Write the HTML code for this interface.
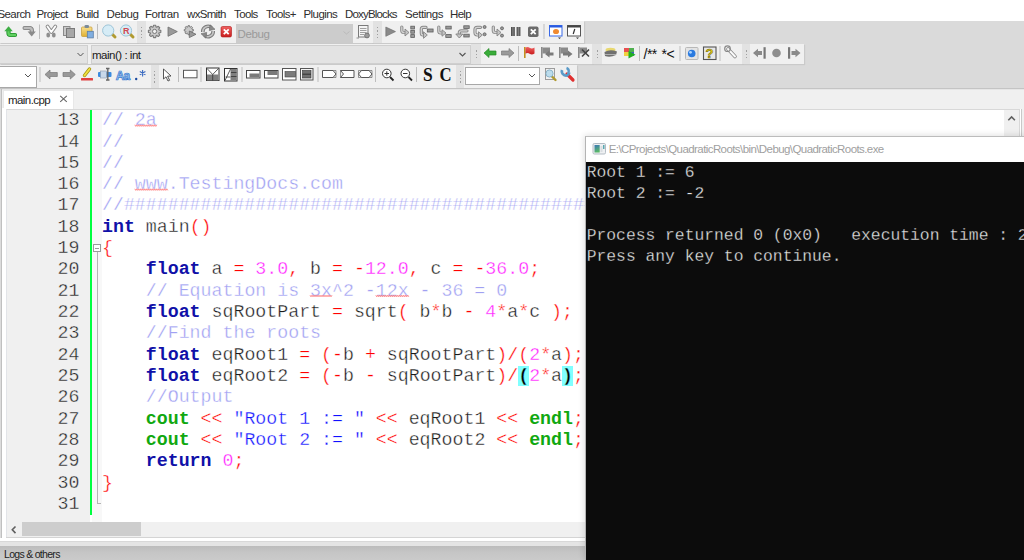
<!DOCTYPE html>
<html><head><meta charset="utf-8">
<style>
*{margin:0;padding:0;box-sizing:border-box}
html,body{width:1024px;height:560px;overflow:hidden;background:#f0f0f0;position:relative;font-family:"Liberation Sans",sans-serif}
.a{position:absolute}
#menu{left:0;top:0;width:1024px;height:21px;background:#fff}
.mi{position:absolute;top:7px;font-size:11.5px;color:#2e2e2e;white-space:pre;line-height:14px}
#dock{left:0;top:21px;width:1024px;height:67px;background:#dadada}
.tb{position:absolute;background:#f0f0f0;box-shadow:1px 1px 1px rgba(0,0,0,0.07)}
.sep{position:absolute;width:1px;background:#c4c4c4}
.grip{position:absolute;width:5px;background:#e2e2e2}
.grip::before{content:"";position:absolute;left:calc(50% - 0.5px);top:6px;bottom:5px;width:1px;background:repeating-linear-gradient(#a0a0a0 0 1.5px,transparent 1.5px 3.5px)}
#code{left:102px;top:110.2px;font-family:"Liberation Mono",monospace;font-size:18.25px;line-height:21.32px;white-space:pre;color:#1a1a1a;-webkit-text-stroke:0.35px #fff}
#nums{left:6px;top:110.2px;width:73.5px;text-align:right;font-family:"Liberation Mono",monospace;font-size:18.25px;line-height:21.32px;white-space:pre;color:#222;-webkit-text-stroke:0.35px #f0f0f0}
.k{color:#1010a8;font-weight:bold;-webkit-text-stroke:0}
.u{color:#10a810;font-weight:bold;-webkit-text-stroke:0}
.o{color:#ff0000}
.n{color:#ff20ff}
.s{color:#1010ff}
.c{color:#a0a0f2}
.b{background:#80ffff;color:#000;font-weight:bold;-webkit-text-stroke:0.35px #80ffff}
.sq{position:absolute;height:2px;background:repeating-linear-gradient(90deg,#ff8a8a 0 1px,#ffdcdc 1px 2px)}
#con{left:585.2px;top:136.2px;width:440px;height:424px;background:#0c0c0c;border-top:1px solid #bcbcbc;border-left:1px solid #b4b4b4;box-shadow:0 0 6px 1px rgba(0,0,0,0.12)}
#ctitle{position:absolute;left:0;top:0;width:100%;height:24.8px;background:#fff}
#ctext{position:absolute;left:0.5px;top:26.2px;font-family:"Liberation Mono",monospace;font-size:16.33px;line-height:20.83px;color:#e6e6e6;white-space:pre;-webkit-text-stroke:0.3px #0c0c0c}
</style></head><body>
<div id="menu" class="a">
<span class="mi" style="left:-2.5px;letter-spacing:-0.6px">Search</span>
<span class="mi" style="left:36.5px;letter-spacing:-0.67px">Project</span>
<span class="mi" style="left:76px;letter-spacing:-0.62px">Build</span>
<span class="mi" style="left:106.5px;letter-spacing:-0.37px">Debug</span>
<span class="mi" style="left:145px;letter-spacing:-0.5px">Fortran</span>
<span class="mi" style="left:187px;letter-spacing:-0.67px">wxSmith</span>
<span class="mi" style="left:234px;letter-spacing:-0.62px">Tools</span>
<span class="mi" style="left:266px;letter-spacing:-0.6px">Tools+</span>
<span class="mi" style="left:303.5px;letter-spacing:-0.58px">Plugins</span>
<span class="mi" style="left:345px;letter-spacing:-0.83px">DoxyBlocks</span>
<span class="mi" style="left:405px;letter-spacing:-0.43px">Settings</span>
<span class="mi" style="left:450px;letter-spacing:-0.67px">Help</span>
</div>
<div id="dock" class="a">
 <div class="tb" style="left:0;top:0;width:136.5px;height:22px"></div>
 <div class="tb" style="left:137px;top:0;width:235px;height:22px"></div>
 <div class="grip" style="left:137px;top:0;width:8.5px;height:22px"></div>
 <div class="tb" style="left:372px;top:0;width:211.5px;height:22px"></div>
 <div class="grip" style="left:373px;top:0;width:8.5px;height:22px"></div>
 <div class="tb" style="left:0;top:22.8px;width:471px;height:20.4px"></div>
 <div class="tb" style="left:471px;top:22.8px;width:121px;height:20.4px"></div>
 <div class="grip" style="left:471px;top:22.8px;width:10px;height:20.4px"></div>
 <div class="tb" style="left:592px;top:22.8px;width:150px;height:20.4px"></div>
 <div class="grip" style="left:592px;top:22.8px;width:10px;height:20.4px"></div>
 <div class="tb" style="left:742px;top:22.8px;width:62px;height:20.4px"></div>
 <div class="grip" style="left:742px;top:22.8px;width:8px;height:20.4px"></div>
 <div class="tb" style="left:0;top:43.8px;width:150px;height:23.2px"></div>
 <div class="tb" style="left:150px;top:43.8px;width:305px;height:23.2px"></div>
 <div class="grip" style="left:150.5px;top:43.8px;width:8.5px;height:23.2px"></div>
 <div class="tb" style="left:455px;top:43.8px;width:122px;height:23.2px"></div>
 <div class="grip" style="left:456px;top:43.8px;width:8px;height:23.2px"></div>
</div>
<!-- combos -->
<div class="a" style="left:-1px;top:45px;width:88.5px;height:18.5px;background:#e3e3e3;border:1px solid #cfcfcf"></div>
<div class="a" style="left:90.5px;top:45px;width:380px;height:18.5px;background:#e3e3e3;border:1px solid #cfcfcf"></div>
<span class="a" style="left:92px;top:47.7px;font-size:11.5px;letter-spacing:-0.48px;color:#1a1a1a;white-space:pre;line-height:14px">main() : int</span>
<div class="a" style="left:236px;top:24px;width:117px;height:18.5px;background:#cccccc"></div>
<span class="a" style="left:237.5px;top:26.7px;font-size:11.5px;letter-spacing:-0.37px;color:#9a9a9a;white-space:pre;line-height:14px">Debug</span>
<div class="a" style="left:-1px;top:66.4px;width:37.5px;height:21.2px;background:#fff;border:1px solid #a8a8a8"></div>
<div class="a" style="left:465px;top:66.5px;width:74.5px;height:18.5px;background:#fff;border:1px solid #a8a8a8"></div>
<!-- ICONS -->
<svg class="a" style="left:0;top:0" width="1024" height="92" viewBox="0 0 1024 92">
<defs>
<linearGradient id="gG" x1="0" y1="0" x2="0" y2="1"><stop offset="0" stop-color="#8ee08e"/><stop offset="1" stop-color="#2a9a2a"/></linearGradient>
<linearGradient id="gY" x1="0" y1="0" x2="0" y2="1"><stop offset="0" stop-color="#f8e090"/><stop offset="1" stop-color="#e0b030"/></linearGradient>
<linearGradient id="gR" x1="0" y1="0" x2="0" y2="1"><stop offset="0" stop-color="#f06060"/><stop offset="1" stop-color="#c81e1e"/></linearGradient>
<linearGradient id="gK" x1="0" y1="0" x2="1" y2="0"><stop offset="0" stop-color="#404040"/><stop offset="0.5" stop-color="#808080"/><stop offset="1" stop-color="#404040"/></linearGradient>
</defs>
<!-- separators row1 -->
<g fill="#bdbdbd">
<rect x="39" y="24.5" width="1" height="14.5"/><rect x="97" y="24" width="1" height="15"/><rect x="543.5" y="24" width="1" height="15"/>
<rect x="39.5" y="67" width="1" height="15"/><rect x="178" y="67" width="1" height="15"/><rect x="200.5" y="67" width="1" height="15"/><rect x="241.5" y="67" width="1" height="15"/><rect x="317.5" y="67" width="1" height="15"/><rect x="375" y="67" width="1" height="15"/><rect x="416" y="67" width="1" height="15"/>
<rect x="518" y="46" width="1" height="15"/><rect x="639" y="46" width="1" height="15"/><rect x="679.5" y="46" width="1" height="15"/><rect x="719.5" y="46" width="1" height="15"/>
</g>
<!-- undo -->
<path d="M8.5 30.5 V33 Q8.5 35 10.5 35 H15" fill="none" stroke="#1f8f2a" stroke-width="4.2" stroke-linecap="round"/>
<path d="M8.5 30.5 V33 Q8.5 35 10.5 35 H15" fill="none" stroke="#5fcf5f" stroke-width="2.4" stroke-linecap="round"/>
<polygon points="4.3,31.2 8.6,26.3 12.8,31.2" fill="#3fae45"/>
<!-- redo -->
<path d="M24.6 28 H29.3 Q31.8 28 31.8 30.5 V32" fill="none" stroke="#7a7a7a" stroke-width="4.2" stroke-linecap="round"/>
<path d="M24.6 28 H29.3 Q31.8 28 31.8 30.5 V32" fill="none" stroke="#bcbcbc" stroke-width="2.4" stroke-linecap="round"/>
<polygon points="27.6,31.5 35.8,31.5 31.7,36.4" fill="#8a8a8a"/>
<!-- cut -->
<path d="M47.5 26.5 L51.3 32 M55.3 26.5 L51.3 32" stroke="#8a8a8a" stroke-width="3.8" stroke-linecap="round"/>
<path d="M47.5 26.5 L51.3 32 M55.3 26.5 L51.3 32" stroke="#fff" stroke-width="1.8" stroke-linecap="round"/>
<ellipse cx="48.2" cy="35" rx="1.9" ry="2.6" fill="#8e8e8e"/><ellipse cx="53.8" cy="35" rx="1.9" ry="2.6" fill="#8e8e8e"/>
<!-- copy -->
<rect x="63.5" y="26.5" width="6.5" height="9" fill="#c8c8c8" stroke="#8a8a8a"/>
<rect x="66.5" y="28.5" width="8" height="9" fill="#a8a8a8" stroke="#7a7a7a"/>
<!-- paste -->
<rect x="81.5" y="27" width="10.5" height="9.5" rx="1" fill="url(#gY)" stroke="#c8a040" stroke-width="0.8"/>
<rect x="84.5" y="25" width="4.5" height="3" rx="1.3" fill="#7a8a98"/>
<rect x="87.3" y="31.3" width="6" height="6.6" fill="#80aee0" stroke="#5a7ea8" stroke-width="0.8"/>
<!-- find -->
<line x1="112" y1="34" x2="115" y2="37" stroke="#b09a30" stroke-width="3" stroke-linecap="round"/>
<circle cx="108.2" cy="30.5" r="5.6" fill="#d6ecf6" stroke="#9cc4d8" stroke-width="1"/>
<!-- replace -->
<line x1="130" y1="34" x2="133" y2="37" stroke="#b09a30" stroke-width="3" stroke-linecap="round"/>
<circle cx="126" cy="30.5" r="5.6" fill="#d6ecf6" stroke="#9cc4d8" stroke-width="1"/>
<text x="123" y="34" font-family="Liberation Sans" font-weight="bold" font-size="9" fill="#d04850">R</text>
<!-- build gear -->
<path d="M158.95 29.91 L160.81 30.37 L160.81 32.43 L158.95 32.89 L158.73 33.42 L159.73 35.06 L158.26 36.53 L156.62 35.53 L156.09 35.75 L155.63 37.61 L153.57 37.61 L153.11 35.75 L152.58 35.53 L150.94 36.53 L149.47 35.06 L150.47 33.42 L150.25 32.89 L148.39 32.43 L148.39 30.37 L150.25 29.91 L150.47 29.38 L149.47 27.74 L150.94 26.27 L152.58 27.27 L153.11 27.05 L153.57 25.19 L155.63 25.19 L156.09 27.05 L156.62 27.27 L158.26 26.27 L159.73 27.74 L158.73 29.38 Z" fill="#c8c8c8" stroke="#7a7a7a" stroke-width="1.1" stroke-linejoin="round"/>
<circle cx="154.6" cy="31.4" r="2.1" fill="#f0f0f0" stroke="#7a7a7a" stroke-width="1"/>
<!-- run -->
<polygon points="168,27 168,36.3 177.3,31.6" fill="#9a9a9a" stroke="#707070" stroke-width="0.8" stroke-linejoin="round"/>
<!-- build & run -->
<path d="M191.92 29.13 L193.34 29.44 L193.34 30.96 L191.92 31.27 L191.76 31.65 L192.54 32.87 L191.47 33.94 L190.25 33.16 L189.87 33.32 L189.56 34.74 L188.04 34.74 L187.73 33.32 L187.35 33.16 L186.13 33.94 L185.06 32.87 L185.84 31.65 L185.68 31.27 L184.26 30.96 L184.26 29.44 L185.68 29.13 L185.84 28.75 L185.06 27.53 L186.13 26.46 L187.35 27.24 L187.73 27.08 L188.04 25.66 L189.56 25.66 L189.87 27.08 L190.25 27.24 L191.47 26.46 L192.54 27.53 L191.76 28.75 Z" fill="#c8c8c8" stroke="#7a7a7a" stroke-width="1" stroke-linejoin="round"/>
<polygon points="189.3,31 189.3,37.6 196,34.3" fill="#9a9a9a" stroke="#6a6a6a" stroke-width="0.8" stroke-linejoin="round"/>
<!-- rebuild -->
<g fill="none" stroke-linecap="butt">
<path d="M202.8 32 A5.3 5.3 0 0 1 211.5 27.6" stroke="#7a7a7a" stroke-width="3.6"/>
<path d="M213.2 31 A5.3 5.3 0 0 1 204.5 35.4" stroke="#7a7a7a" stroke-width="3.6"/>
<path d="M202.8 32 A5.3 5.3 0 0 1 211.5 27.6" stroke="#c4c4c4" stroke-width="1.6"/>
<path d="M213.2 31 A5.3 5.3 0 0 1 204.5 35.4" stroke="#c4c4c4" stroke-width="1.6"/>
</g>
<polygon points="210,24.8 215,29.3 209.3,30.6" fill="#8a8a8a" stroke="#6a6a6a" stroke-width="0.6"/>
<polygon points="206,38.2 201,33.7 206.7,32.4" fill="#8a8a8a" stroke="#6a6a6a" stroke-width="0.6"/>
<!-- abort -->
<rect x="221" y="26.5" width="10.5" height="10.5" rx="1.5" fill="url(#gR)" stroke="#b01818" stroke-width="0.6"/>
<path d="M223.8 29.3 L228.7 34.2 M228.7 29.3 L223.8 34.2" stroke="#fff" stroke-width="1.8"/>
<!-- combo chevron debug -->
<path d="M343.5 31.5 L346.5 34 L349.5 31.5" fill="none" stroke="#b8b8b8" stroke-width="0.9"/>
<!-- build options -->
<rect x="358.5" y="25.5" width="9.5" height="11.5" fill="#f4f4f4" stroke="#7a7a7a" stroke-width="1"/>
<path d="M360 28.5 H366.5 M360 30.5 H366.5 M360 32.5 H366.5 M360 34.5 H364" stroke="#8a8a8a" stroke-width="0.8"/>
<circle cx="367" cy="35.5" r="2.4" fill="#9a9a9a" stroke="#6a6a6a" stroke-width="0.8"/>
<path d="M356.5 38 H359" stroke="#777" stroke-width="0.8"/>
<!-- debugger run -->
<polygon points="385.8,27 385.8,36.3 395.5,31.6" fill="#8a8a8a" stroke="#6a6a6a" stroke-width="0.6"/>
<!-- run to cursor -->
<g fill="none" stroke-linecap="round" stroke-linejoin="round">
<g stroke="#8a8a8a" stroke-width="3.2">
<path d="M401.8 27 V30.5 Q401.8 32.5 403.8 32.5 H405.5"/>
<path d="M426 27.3 H423 Q421.3 27.3 421.3 29.3 V33 Q421.3 35 423 35 H424"/>
<path d="M438.8 27 V31 Q438.8 33 440.8 33 H442.5"/>
<path d="M467 30.8 H461.3 Q459.3 30.8 459.3 32.8 V34"/>
<path d="M480.5 27.3 H477.3 Q475 27.3 475 29.6 V32.6 Q475 35 477.3 35 H479"/>
<path d="M493.3 27 V30.5 Q493.3 32.5 495.3 32.5 H497.5"/>
</g>
<g stroke="#d4d4d4" stroke-width="1.3">
<path d="M401.8 27 V30.5 Q401.8 32.5 403.8 32.5 H405.5"/>
<path d="M426 27.3 H423 Q421.3 27.3 421.3 29.3 V33 Q421.3 35 423 35 H424"/>
<path d="M438.8 27 V31 Q438.8 33 440.8 33 H442.5"/>
<path d="M467 30.8 H461.3 Q459.3 30.8 459.3 32.8 V34"/>
<path d="M480.5 27.3 H477.3 Q475 27.3 475 29.6 V32.6 Q475 35 477.3 35 H479"/>
<path d="M493.3 27 V30.5 Q493.3 32.5 495.3 32.5 H497.5"/>
</g>
</g>
<g fill="#c4c4c4" stroke="#858585" stroke-width="0.9" stroke-linejoin="round">
<polygon points="405,29 409,32.5 405,36"/>
<polygon points="423.5,31.8 427.3,35 423.5,38.3"/>
<polygon points="442,29.8 446,33 442,36.2"/>
<polygon points="455.8,34 462.8,34 459.3,38"/>
<polygon points="478.5,31.8 482.3,35 478.5,38.3"/>
<polygon points="497,29 501,32.5 497,36"/>
</g>
<g fill="#9a9a9a" stroke="#5e5e5e" stroke-width="0.8">
<rect x="410.8" y="26.2" width="3.6" height="2.8"/><rect x="410.8" y="30.4" width="3.6" height="2.8"/><rect x="410.8" y="34.6" width="3.6" height="2.8"/>
<rect x="427.3" y="29" width="5.8" height="3"/>
<rect x="445.8" y="26.2" width="5.4" height="2.8"/><rect x="445.8" y="34.6" width="5.4" height="2.8"/>
<rect x="463.8" y="25.8" width="5.4" height="2.8"/><rect x="463.8" y="34.2" width="5.4" height="2.8"/>
<circle cx="484.6" cy="27" r="1.5"/><circle cx="484.6" cy="34.3" r="1.5"/>
<circle cx="502" cy="28.3" r="1.5"/><circle cx="502" cy="35.6" r="1.5"/>
</g>
<!-- pause -->
<rect x="511" y="27" width="3.8" height="9" fill="url(#gK)"/><rect x="516.6" y="27" width="3.8" height="9" fill="url(#gK)"/>
<!-- stop -->
<rect x="528" y="26.5" width="10.5" height="10.5" rx="1.8" fill="#6a6a6a"/>
<path d="M530.8 29.3 L535.7 34.2 M535.7 29.3 L530.8 34.2" stroke="#fff" stroke-width="1.8"/>
<!-- debug windows -->
<rect x="549.5" y="25.5" width="12.5" height="10.5" fill="#fff" stroke="#3a6ae8" stroke-width="1"/>
<rect x="549.5" y="25.5" width="12.5" height="2" fill="#2a5ae0"/>
<ellipse cx="556" cy="31.5" rx="3" ry="2.6" fill="#f08a30"/>
<polygon points="558,37.5 561,37.5 559.5,39" fill="#333"/>
<!-- info window -->
<rect x="567.5" y="25.5" width="13" height="10.5" fill="#fff" stroke="#555" stroke-width="1"/>
<rect x="567.5" y="25.5" width="13" height="2" fill="#444"/>
<path d="M574.8 29 L573.2 34" stroke="#333" stroke-width="1.2"/>
<polygon points="576,37.5 579,37.5 577.5,39" fill="#333"/>
<!-- row 2 combo chevrons -->
<path d="M77.5 53 L80.5 56 L83.5 53" fill="none" stroke="#555" stroke-width="1"/>
<path d="M459.5 53 L462.5 56 L465.5 53" fill="none" stroke="#555" stroke-width="1.1"/>
<!-- green back arrow -->
<polygon points="484,53 489,48.5 489,51 496,51 496,55 489,55 489,57.5" fill="#3aad3a" stroke="#2a8a2a" stroke-width="0.7" stroke-linejoin="round"/>
<!-- gray fwd arrow -->
<polygon points="514,53 509,48.5 509,51 501.5,51 501.5,55 509,55 509,57.5" fill="#9a9a9a" stroke="#7a7a7a" stroke-width="0.7" stroke-linejoin="round"/>
<!-- flag -->
<rect x="524" y="47" width="1.6" height="11" fill="#c09020"/>
<path d="M525.5 47.5 Q528 46.5 530 48 Q532 49 534.5 47.5 V53.5 Q532 55 530 54 Q528 52.5 525.5 53.5 Z" fill="url(#gR)"/>
<!-- bookmark prev/next/clear -->
<g fill="#8a8a8a">
<rect x="541" y="47" width="1.6" height="11"/><path d="M542.5 47.5 H550 V53.5 H542.5 Z"/><polygon points="545,54 549.5,50.5 549.5,52.5 553.5,52.5 553.5,55.5 549.5,55.5 549.5,57.5" fill="#7a7a7a"/>
<rect x="559" y="47" width="1.6" height="11"/><path d="M560.5 47.5 H568 V53.5 H560.5 Z"/><polygon points="572.5,54 568,50.5 568,52.5 563,52.5 563,55.5 568,55.5 568,57.5" fill="#7a7a7a"/>
<rect x="578" y="47" width="1.6" height="11"/><path d="M579.5 47.5 H587 V53.5 H579.5 Z"/>
</g>
<path d="M582 49.5 L589 56.5 M589 49.5 L582 56.5" stroke="#444" stroke-width="1.6"/>
<!-- doxywizard -->
<ellipse cx="610.5" cy="50" rx="5" ry="2.2" fill="#e8d870"/>
<path d="M604.5 52 Q610 49 617 51.5 L616 55 Q610 58 605 56 Z" fill="#707070"/>
<path d="M605 54.5 H616" stroke="#c0c0c0" stroke-width="0.8"/>
<!-- doxy extract -->
<rect x="624" y="48" width="5" height="4" fill="#e85050"/><rect x="629" y="48" width="5" height="4" fill="#50b050"/><rect x="624" y="52" width="5" height="4" fill="#f0d040"/><rect x="629" y="52" width="5" height="4" fill="#4060c0"/>
<polygon points="628.5,51 628.5,58.5 635.5,54.7" fill="#20b020"/>
<!-- /** *< -->
<text x="643.5" y="59" font-family="Liberation Sans" font-size="14" fill="#111" letter-spacing="-0.5">/**</text>
<text x="661.5" y="59" font-family="Liberation Sans" font-size="14" fill="#111" letter-spacing="-0.5">*&lt;</text>
<!-- html -->
<rect x="685.5" y="47.5" width="12.5" height="12" rx="1" fill="#e4e4e4" stroke="#b8b8b8"/>
<circle cx="691.7" cy="53.5" r="3.8" fill="#2a7ae0"/><circle cx="690.5" cy="52.3" r="1.4" fill="#aad4ff"/>
<!-- help -->
<rect x="703.5" y="47" width="12.5" height="12.5" fill="#e8e8e8" stroke="#555" stroke-width="1.1"/>
<text x="705.6" y="58" font-family="Liberation Sans" font-weight="bold" font-size="13" fill="#e8d010" stroke="#6a6000" stroke-width="0.5">?</text>
<!-- wrench -->
<path d="M728 49 L735 56.5" stroke="#888" stroke-width="3.6" stroke-linecap="round"/>
<path d="M728 49 L735 56.5" stroke="#fafafa" stroke-width="2" stroke-linecap="round"/>
<circle cx="727.5" cy="48.7" r="2.8" fill="none" stroke="#888" stroke-width="1.2"/>
<!-- prev/next jump -->
<polygon points="753,53 758,48.8 758,51 762,51 762,55 758,55 758,57.2" fill="#8a8a8a"/>
<rect x="763.5" y="47.2" width="2.2" height="11.5" fill="#777"/>
<circle cx="776.5" cy="53" r="4.3" fill="#8e8e8e"/>
<polygon points="800.5,53 795.5,48.8 795.5,51 791.5,51 791.5,55 795.5,55 795.5,57.2" fill="#8a8a8a"/>
<rect x="788" y="47.2" width="2.2" height="11.5" fill="#777"/>
<!-- row3: white combo chevron -->
<path d="M25 74 L28 77 L31 74" fill="none" stroke="#555" stroke-width="1"/>
<!-- arrows -->
<polygon points="45,74.5 50,70 50,72.5 57.3,72.5 57.3,76.5 50,76.5 50,79" fill="#999" stroke="#777" stroke-width="0.7" stroke-linejoin="round"/>
<polygon points="75.3,74.5 70.3,70 70.3,72.5 63,72.5 63,76.5 70.3,76.5 70.3,79" fill="#999" stroke="#777" stroke-width="0.7" stroke-linejoin="round"/>
<!-- highlight pen -->
<path d="M84.5 75.5 L89.5 69" stroke="#a09010" stroke-width="3.4" stroke-linecap="round"/>
<path d="M84.5 75.5 L89.5 69" stroke="#f0e040" stroke-width="2" stroke-linecap="round"/>
<rect x="81" y="78" width="12" height="2.6" rx="0.5" fill="#e04040"/>
<!-- select -->
<rect x="98" y="72" width="13.5" height="5" rx="1" fill="#3a8ae0"/>
<rect x="100.5" y="71" width="6" height="7" fill="#c8d8ea" stroke="#8a9ab0" stroke-width="0.6"/>
<path d="M107.8 68.5 V80 M106 68.5 H109.5 M106 80 H109.5" stroke="#666" stroke-width="1.4"/>
<!-- Aa -->
<text x="115.8" y="79.6" font-family="Liberation Sans" font-weight="bold" font-size="12" fill="#9cc4ee" stroke="#3a7ad0" stroke-width="0.7" letter-spacing="-1">Aa</text>
<!-- .* -->
<circle cx="136.2" cy="79" r="1.2" fill="#1a4aa0"/>
<path d="M142.6 70 V76.4 M139.8 71.6 L145.4 74.8 M145.4 71.6 L139.8 74.8" stroke="#3a6ac0" stroke-width="1.1"/>
<!-- cursor -->
<path d="M163.5 69 V79 L166 76.8 L168 81 L169.6 80.3 L167.6 76.2 L171 76 Z" fill="#fff" stroke="#444" stroke-width="0.9" stroke-linejoin="round"/>
<!-- rect -->
<rect x="183.5" y="70.3" width="13.5" height="7.5" fill="#fff" stroke="#555" stroke-width="1"/>
<!-- split icons -->
<rect x="206.5" y="68" width="12.5" height="12.5" fill="#fff" stroke="#333" stroke-width="1"/>
<rect x="207" y="74.5" width="11.5" height="6" fill="#808080"/>
<path d="M207 68.5 L212.7 74.5 L218.5 68.5 M212.7 74.5 V80.5" fill="none" stroke="#333" stroke-width="0.8"/>
<rect x="224.5" y="68.5" width="12.5" height="12.5" fill="#fff" stroke="#333" stroke-width="1"/>
<rect x="230.5" y="69" width="6" height="11.5" fill="#808080"/>
<path d="M225 80.5 L230.5 69 M231 72.5 H236.5 M231 76.5 H236.5 M225.5 77 H230.5" fill="none" stroke="#333" stroke-width="0.8"/>
<rect x="246.5" y="70.5" width="13.5" height="7.5" fill="#fff" stroke="#444" stroke-width="1"/>
<rect x="249.5" y="73.5" width="10" height="4" fill="#7a7a7a"/>
<rect x="264.5" y="70.5" width="13.5" height="7.5" fill="#fff" stroke="#444" stroke-width="1"/>
<rect x="267.5" y="71" width="10" height="4" fill="#7a7a7a"/>
<rect x="282.5" y="68.5" width="13.5" height="11.5" fill="#fff" stroke="#555" stroke-width="1"/>
<rect x="285" y="71.5" width="10.5" height="5.5" fill="#7a7a7a" stroke="#444" stroke-width="0.6"/>
<rect x="300.5" y="68.5" width="12.5" height="11.5" fill="#f4f4f4" stroke="#555" stroke-width="1"/>
<rect x="302.5" y="70.5" width="8.5" height="7.5" fill="#707070" stroke="#333" stroke-width="0.6"/>
<path d="M302.5 74.2 H311" stroke="#222" stroke-width="0.8"/>
<path d="M322.5 70.5 H333 L336 74 L333 77.5 H322.5 Z" fill="#fff" stroke="#555" stroke-width="1"/>
<path d="M333 70.5 L336 70.5 L336 77.5 L333 77.5" fill="none" stroke="#555" stroke-width="0.6"/>
<path d="M340.5 70.5 H354 V77.5 H340.5 L343.5 74 Z" fill="#fff" stroke="#555" stroke-width="1"/>
<path d="M340.5 70.5 V77.5" stroke="#555" stroke-width="0.6"/>
<path d="M361.5 70.5 H369 L372 74 L369 77.5 H361.5 L358.5 74 Z" fill="#fff" stroke="#555" stroke-width="1"/>
<path d="M358.5 70.5 H372 V77.5 H358.5 Z" fill="none" stroke="#555" stroke-width="0.6"/>
<!-- zoom -->
<line x1="390" y1="77" x2="393.5" y2="80.5" stroke="#222" stroke-width="1.8"/>
<circle cx="386.8" cy="73.5" r="4.3" fill="#fff" stroke="#333" stroke-width="1"/>
<path d="M384.5 73.5 H389 M386.8 71.3 V75.7" stroke="#333" stroke-width="1"/>
<line x1="408.5" y1="77" x2="412" y2="80.5" stroke="#222" stroke-width="1.8"/>
<circle cx="405.3" cy="73.5" r="4.3" fill="#fff" stroke="#333" stroke-width="1"/>
<path d="M403 73.5 H407.5" stroke="#333" stroke-width="1"/>
<!-- S C -->
<text x="423" y="81.3" font-family="Liberation Serif" font-weight="bold" font-size="19" fill="#111" transform="translate(423 81.3) scale(0.92 1) translate(-423 -81.3)">S</text>
<text x="439.5" y="81.3" font-family="Liberation Serif" font-weight="bold" font-size="19" fill="#111" transform="translate(439.5 81.3) scale(0.88 1) translate(-439.5 -81.3)">C</text>
<!-- combo chevron -->
<path d="M529 74 L532 77 L535 74" fill="none" stroke="#555" stroke-width="1"/>
<!-- search doc -->
<rect x="545.5" y="68.5" width="9" height="11" fill="#f0f0f0" stroke="#888" stroke-width="0.8"/>
<line x1="552" y1="76.5" x2="555.5" y2="80" stroke="#b09a30" stroke-width="2.4" stroke-linecap="round"/>
<circle cx="549.5" cy="73.5" r="3.6" fill="#bcdcec" stroke="#7aa8c0" stroke-width="0.8"/>
<!-- wrench blue red -->
<path d="M567 74 L573 80" stroke="#e03030" stroke-width="3.2" stroke-linecap="round"/>
<path d="M562 70 Q561 73 564 75 Q567 76.5 568.5 74 L567 74" fill="none" stroke="#5a9ac8" stroke-width="2.6"/>
<path d="M566.5 68 Q569.5 69 568.5 73" fill="none" stroke="#5a9ac8" stroke-width="2.4"/>
</svg>
<!-- /ICONS -->
<!-- tab strip / notebook -->
<div class="a" style="left:0;top:88px;width:1024px;height:1px;background:#c4c4c4"></div>
<div class="a" style="left:0;top:89px;width:1024px;height:1px;background:#e6e6e6"></div>
<div class="a" style="left:0;top:89px;width:1px;height:452px;background:#dcdcdc"></div>
<div class="a" style="left:1px;top:89px;width:1px;height:452px;background:#c0c0c0"></div>
<div class="a" style="left:3px;top:90px;width:71px;height:18.5px;background:#fff;border:1px solid #e8e8e8;border-bottom:none"></div>
<span class="a" style="left:8px;top:92.5px;font-size:11.5px;letter-spacing:-0.57px;line-height:14px;color:#222;white-space:pre">main.cpp</span>
<svg class="a" style="left:59px;top:95px" width="10" height="8"><path d="M1.2 0.8 L7.8 6.8 M7.8 0.8 L1.2 6.8" stroke="#666" stroke-width="1.1"/></svg>
<!-- editor -->
<div class="a" style="left:2px;top:108px;width:4px;height:433px;background:#fff"></div>
<div class="a" style="left:6px;top:108.5px;width:1014px;height:429px;border:1px solid #d8d8d8;border-left-color:#e2e4e8;background:#fff"></div>
<div class="a" style="left:7px;top:109.5px;width:83px;height:412px;background:#f0f0f0"></div>
<div class="a" style="left:90px;top:109.5px;width:2.3px;height:405px;background:#00ff40"></div>
<div class="a" style="left:92.3px;top:109.5px;width:9.5px;height:412px;background:#f8f8f8"></div>
<div id="nums" class="a">13
14
15
16
17
18
19
20
21
22
23
24
25
26
27
28
29
30
31</div>
<div id="code" class="a"><span class="c">// 2a</span>
<span class="c">//</span>
<span class="c">//</span>
<span class="c">// www.TestingDocs.com</span>
<span class="c">//############################################################</span>
<span class="k">int</span> main<span class="o">()</span>
<span class="o">{</span>
    <span class="k">float</span> a <span class="o">=</span> <span class="n">3.0</span><span class="o">,</span> b <span class="o">=</span> <span class="o">-</span><span class="n">12.0</span><span class="o">,</span> c <span class="o">=</span> <span class="o">-</span><span class="n">36.0</span><span class="o">;</span>
    <span class="c">// Equation is 3x^2 -12x - 36 = 0</span>
    <span class="k">float</span> sqRootPart <span class="o">=</span> sqrt<span class="o">(</span> b<span class="o">*</span>b <span class="o">-</span> <span class="n">4</span><span class="o">*</span>a<span class="o">*</span>c <span class="o">);</span>
    <span class="c">//Find the roots</span>
    <span class="k">float</span> eqRoot1 <span class="o">=</span> <span class="o">(-</span>b <span class="o">+</span> sqRootPart<span class="o">)/(</span><span class="n">2</span><span class="o">*</span>a<span class="o">);</span>
    <span class="k">float</span> eqRoot2 <span class="o">=</span> <span class="o">(-</span>b <span class="o">-</span> sqRootPart<span class="o">)/</span><span class="b">(</span><span class="n">2</span><span class="o">*</span>a<span class="b">)</span><span class="o">;</span>
    <span class="c">//Output</span>
    <span class="u">cout</span> <span class="o">&lt;&lt;</span> <span class="s">"Root 1 := "</span> <span class="o">&lt;&lt;</span> eqRoot1 <span class="o">&lt;&lt;</span> <span class="u">endl</span><span class="o">;</span>
    <span class="u">cout</span> <span class="o">&lt;&lt;</span> <span class="s">"Root 2 := "</span> <span class="o">&lt;&lt;</span> eqRoot2 <span class="o">&lt;&lt;</span> <span class="u">endl</span><span class="o">;</span>
    <span class="k">return</span> <span class="n">0</span><span class="o">;</span>
<span class="o">}</span>
</div>
<!-- squiggles -->
<svg class="a" style="left:0;top:0" width="600" height="320"><path d="M134.80 124.80 L135.80 126.40 L136.80 124.80 L137.80 126.40 L138.80 124.80 L139.80 126.40 L140.80 124.80 L141.80 126.40 L142.80 124.80 L143.80 126.40 L144.80 124.80 L145.80 126.40 L146.80 124.80 L147.80 126.40 L148.80 124.80 L149.80 126.40 L150.80 124.80 L151.80 126.40 L152.80 124.80 L153.80 126.40 L154.80 124.80 L155.80 126.40 L156.80 124.80" fill="none" stroke="#ff7070" stroke-width="0.8"/><path d="M134.80 188.80 L135.80 190.40 L136.80 188.80 L137.80 190.40 L138.80 188.80 L139.80 190.40 L140.80 188.80 L141.80 190.40 L142.80 188.80 L143.80 190.40 L144.80 188.80 L145.80 190.40 L146.80 188.80 L147.80 190.40 L148.80 188.80 L149.80 190.40 L150.80 188.80 L151.80 190.40 L152.80 188.80 L153.80 190.40 L154.80 188.80 L155.80 190.40 L156.80 188.80 L157.80 190.40 L158.80 188.80 L159.80 190.40 L160.80 188.80 L161.80 190.40 L162.80 188.80 L163.80 190.40 L164.80 188.80 L165.80 190.40 L166.80 188.80 L167.80 190.40" fill="none" stroke="#ff7070" stroke-width="0.8"/><path d="M310.00 295.20 L311.00 296.80 L312.00 295.20 L313.00 296.80 L314.00 295.20 L315.00 296.80 L316.00 295.20 L317.00 296.80 L318.00 295.20 L319.00 296.80 L320.00 295.20 L321.00 296.80 L322.00 295.20 L323.00 296.80 L324.00 295.20 L325.00 296.80 L326.00 295.20 L327.00 296.80 L328.00 295.20 L329.00 296.80 L330.00 295.20 L331.00 296.80 L332.00 295.20" fill="none" stroke="#ff7070" stroke-width="0.8"/><path d="M375.80 295.20 L376.80 296.80 L377.80 295.20 L378.80 296.80 L379.80 295.20 L380.80 296.80 L381.80 295.20 L382.80 296.80 L383.80 295.20 L384.80 296.80 L385.80 295.20 L386.80 296.80 L387.80 295.20 L388.80 296.80 L389.80 295.20 L390.80 296.80 L391.80 295.20 L392.80 296.80 L393.80 295.20 L394.80 296.80 L395.80 295.20 L396.80 296.80 L397.80 295.20 L398.80 296.80 L399.80 295.20 L400.80 296.80 L401.80 295.20 L402.80 296.80 L403.80 295.20 L404.80 296.80 L405.80 295.20 L406.80 296.80 L407.80 295.20 L408.80 296.80" fill="none" stroke="#ff7070" stroke-width="0.8"/></svg>
<!-- fold -->
<div class="a" style="left:93.3px;top:244.3px;width:7.6px;height:7.6px;border:1px solid #9a9a9a;background:#fff"></div>
<div class="a" style="left:95px;top:247.6px;width:4px;height:1px;background:#9a9a9a"></div>
<div class="a" style="left:96.8px;top:252px;width:1px;height:252px;background:#b4b4b4"></div>
<div class="a" style="left:96.8px;top:503px;width:4px;height:1px;background:#b4b4b4"></div>
<!-- vscroll -->
<div class="a" style="left:1004px;top:109.5px;width:15px;height:412px;background:#f0f0f0"></div>
<svg class="a" style="left:1004px;top:109.5px" width="15" height="20"><path d="M4.3 10.3 L7.6 7 L10.9 10.3" fill="none" stroke="#606060" stroke-width="1.6"/></svg>
<div class="a" style="left:1021px;top:108.5px;width:1px;height:30px;background:#c8c8c8"></div>
<div class="a" style="left:1020px;top:108.5px;width:1px;height:30px;background:#fff"></div>
<!-- hscroll -->
<div class="a" style="left:7px;top:521.5px;width:997px;height:15.5px;background:#f0f0f0"></div>
<div class="a" style="left:22px;top:522px;width:119px;height:13.5px;background:#cdcdcd"></div>
<svg class="a" style="left:6px;top:521.5px" width="16" height="16"><path d="M9.5 4.5 L6.3 7.8 L9.5 11.1" fill="none" stroke="#606060" stroke-width="1.6"/></svg>
<div class="a" style="left:0;top:537.5px;width:1024px;height:4px;background:#fff"></div>
<div class="a" style="left:6px;top:536.6px;width:1014px;height:1px;background:#d4d4d4"></div>
<div class="a" style="left:0;top:541px;width:1024px;height:19px;background:linear-gradient(#d8d8d8 0 1px,#e4e4e4 1px 5px,#bcbcbc 5px,#c6c6c6 12px,#cacaca)"></div>
<span class="a" style="left:4px;top:547.5px;font-size:10.5px;letter-spacing:-0.7px;line-height:12px;color:#222;white-space:pre">Logs &amp; others</span>
<!-- console -->
<div id="con" class="a">
 <div id="ctitle"></div>
 <svg class="a" style="left:0;top:0" width="40" height="25">
  <defs><linearGradient id="ci" x1="0" y1="0" x2="0.3" y2="1"><stop offset="0" stop-color="#3a78b8"/><stop offset="1" stop-color="#5ab868"/></linearGradient></defs>
  <rect x="7" y="6.5" width="12.5" height="10.5" rx="1.3" fill="#eef0f2" stroke="#b4bcc4" stroke-width="1"/>
  <rect x="8.5" y="8" width="5.2" height="7.5" fill="url(#ci)"/>
  <rect x="17" y="8" width="1.5" height="4" fill="#5aa8b0"/>
  <rect x="14.5" y="9" width="2" height="6" fill="#d8dce0"/>
 </svg>
 <span class="a" style="left:22.5px;top:5.2px;font-size:11.5px;letter-spacing:-0.58px;color:#a0a0a0;white-space:pre;line-height:14px">E:\CProjects\QuadraticRoots\bin\Debug\QuadraticRoots.exe</span>
 <div id="ctext">Root 1 := 6
Root 2 := -2

Process returned 0 (0x0)   execution time : 2
Press any key to continue.</div>
</div>
</body></html>
